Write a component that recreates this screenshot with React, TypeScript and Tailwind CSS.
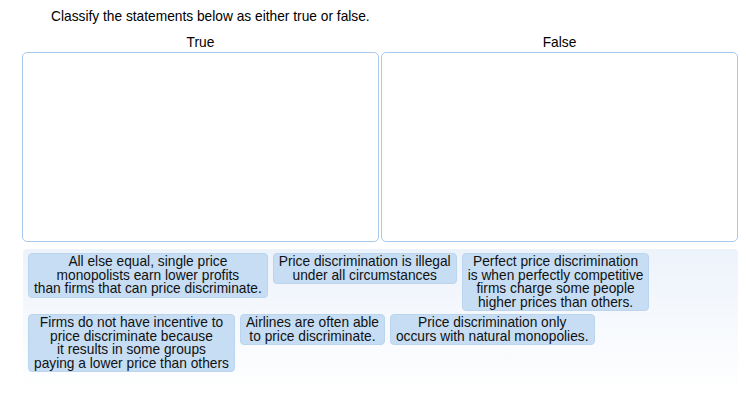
import React from "react";

const chipsRow = [
  ["All else equal, single price", "monopolists earn lower profits", "than firms that can price discriminate."],
  ["Price discrimination is illegal", "under all circumstances"],
  ["Perfect price discrimination", "is when perfectly competitive", "firms charge some people", "higher prices than others."],
  ["Firms do not have incentive to", "price discriminate because", "it results in some groups", "paying a lower price than others"],
  ["Airlines are often able", "to price discriminate."],
  ["Price discrimination only", "occurs with natural monopolies."],
];

export default function App() {
  return (
    <div
      className="w-[746px] h-[417px] bg-white text-[13.75px] text-black overflow-hidden"
      style={{ fontFamily: '"Liberation Sans", Arial, sans-serif' }}
    >
      <div className="pl-[51px] pt-[9px] leading-[15px]">
        Classify the statements below as either true or false.
      </div>
      <div className="ml-[22px] w-[716px] mt-[11px] grid grid-cols-2 gap-x-[2px]">
        <div className="text-center leading-[15px] mb-[2px]">True</div>
        <div className="text-center leading-[15px] mb-[2px]">False</div>
        <div className="h-[190px] border border-[#a9c9ee] rounded-[5px] bg-white" />
        <div className="h-[190px] border border-[#a9c9ee] rounded-[5px] bg-white" />
      </div>
      <div className="ml-[23px] w-[715px] mt-[7px] h-[145px] rounded-[4px] bg-gradient-to-b from-[#edf3fb] via-[#f6f9fd] to-white pt-[4px] px-[5px] flex flex-wrap items-start gap-x-[5px] gap-y-[3px] content-start">
        {chipsRow.map((lines, i) => (
          <div
            key={i}
            className="bg-[#c6ddf3] border border-[#bcd5ef] rounded-[4px] px-[5px] pt-[1px] pb-[1px] text-center leading-[13.5px] whitespace-nowrap text-[#111]"
          >
            {lines.map((l, j) => (
              <div key={j}>{l}</div>
            ))}
          </div>
        ))}
      </div>
    </div>
  );
}
